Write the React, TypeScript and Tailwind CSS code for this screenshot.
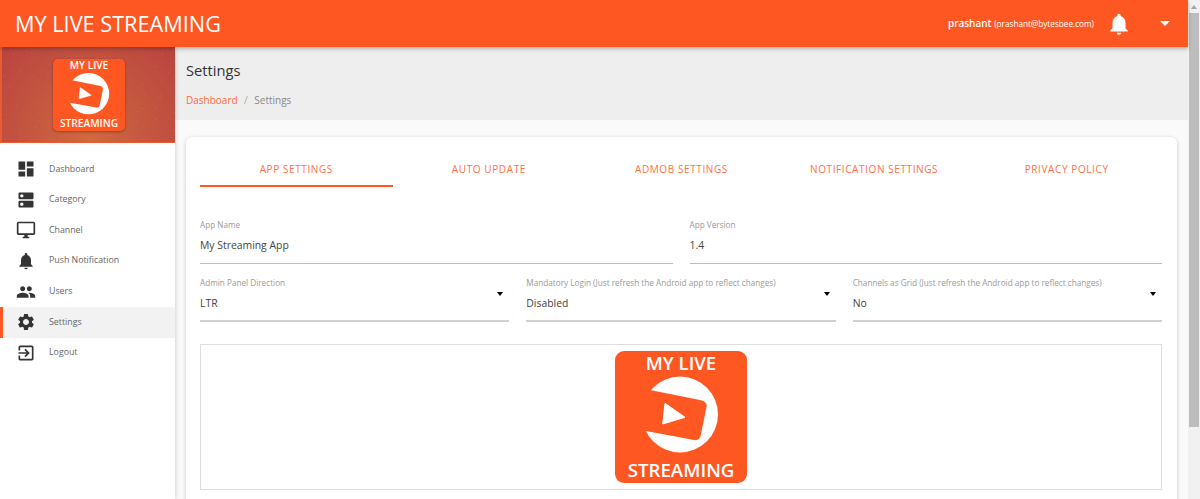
import { MdDashboard, MdDns, MdOutlineDesktopWindows, MdNotifications, MdPeople, MdSettings, MdExitToApp } from "react-icons/md";

function Logo({ className }: { className: string }) {
  return (
    <svg viewBox="0 0 132 132" className={className}>
      <rect width="132" height="132" rx="9" fill="#ff5722" />
      <circle cx="65" cy="63.5" r="38" fill="#fff" />
      <path d="M35 39 L85 49 Q92.500 50.500 91.500 56 L86 83 Q85 90 79 89 L31 80 L10 80 L10 39 Z" fill="#ff5722" />
      <path d="M50 52.300 L70 66.300 L47.700 73 Z" fill="#fff" stroke="#fff" strokeWidth="1" strokeLinejoin="round" />
      <text x="66" y="18.500" textAnchor="middle" fill="#fff" fontFamily="'Open Sans',sans-serif" fontWeight="600" fontSize="18.500">MY LIVE</text>
      <text x="66" y="125.500" textAnchor="middle" fill="#fff" fontFamily="'Open Sans',sans-serif" fontWeight="600" fontSize="18.700">STREAMING</text>
    </svg>
  );
}

const nav = [
  { label: "Dashboard", Icon: MdDashboard },
  { label: "Category", Icon: MdDns },
  { label: "Channel", Icon: MdOutlineDesktopWindows },
  { label: "Push Notification", Icon: MdNotifications },
  { label: "Users", Icon: MdPeople },
  { label: "Settings", Icon: MdSettings, active: true },
  { label: "Logout", Icon: MdExitToApp },
];

const tabs = ["APP SETTINGS", "AUTO UPDATE", "ADMOB SETTINGS", "NOTIFICATION SETTINGS", "PRIVACY POLICY"];

const specks = Array.from({ length: 90 }, (_, i) => ({
  x: (i * 73 + (i * i * 17) % 41) % 175,
  y: (i * 37 + (i * i * 29) % 53) % 96,
}));

function Field({ label, value, select }: { label: string; value: string; select?: boolean }) {
  return (
    <div className={`relative h-[46px] min-w-0 flex-1 ${select ? "border-b-2 border-[#d0d0d0]" : "border-b border-[#bdbdbd]"}`}>
      <div className="pt-[1px] text-[8.200px] leading-[12px] text-[#9a9a9a] whitespace-nowrap">{label}</div>
      <div className="mt-[6px] text-[10.400px] leading-[16px] text-[#444]">{value}</div>
      {select && <div className="absolute right-[6px] top-[16px] h-0 w-0 border-x-[3.500px] border-t-[4px] border-x-transparent border-t-black" />}
    </div>
  );
}

export default function App() {
  return (
    <div className="flex h-[499px] w-[1200px] overflow-hidden font-['Open_Sans',sans-serif]">
      <div className="flex min-w-0 flex-1 flex-col">
        <header className="relative z-20 flex h-[47px] shrink-0 items-center bg-[#ff5722] pl-[15px] pr-[18px] shadow-[0_2px_4px_rgba(0,0,0,0.25)]">
          <div className="flex-1 text-[21.700px] leading-[28px] text-white">MY LIVE STREAMING</div>
          <div className="text-[10px] font-semibold text-white">prashant <span className="text-[8.200px] font-normal">(prashant@bytesbee.com)</span></div>
          <MdNotifications className="ml-[12px] text-white" size={26} />
          <div className="ml-[28px] h-0 w-0 border-x-[5px] border-t-[5px] border-x-transparent border-t-white" />
        </header>
        <div className="flex min-h-0 flex-1">
          <aside className="relative z-10 w-[175px] shrink-0 bg-white shadow-[1px_0_4px_rgba(0,0,0,0.15)]">
            <div className="relative flex h-[96px] items-center justify-center border-b border-l-2 border-[#ee5a30] bg-[radial-gradient(ellipse_at_50%_95%,#d2693f_0%,#c65a40_40%,#b9433f_100%)]">
              <svg className="absolute inset-0 h-full w-full" viewBox="0 0 175 96">
                {specks.map((s, i) => (
                  <rect key={i} x={s.x} y={s.y} width="0.800" height="0.800" fill="#f08a5a" opacity="0.6" />
                ))}
              </svg>
              <Logo className="relative h-[72px] w-[72px] rounded-[5px] shadow-[0_1px_3px_rgba(0,0,0,0.3)]" />
            </div>
            <nav className="pt-[11px]">
              {nav.map(({ label, Icon, active }) => (
                <div key={label} className={`flex h-[30.600px] items-center text-[8.800px] text-[#666] ${active ? "border-l-[3px] border-[#ff5722] bg-[#f2f2f2] pl-[13px]" : "pl-[16px]"}`}>
                  <Icon size={20} className="text-[#333]" />
                  <span className="ml-[13px]">{label}</span>
                </div>
              ))}
            </nav>
          </aside>
          <main className="min-w-0 flex-1 overflow-hidden bg-[#fafafa]">
            <div className="h-[73px] bg-[#eeeeee] pl-[11px] pt-[13px]">
              <div className="text-[14.700px] leading-[20px] text-[#333]">Settings</div>
              <div className="mt-[13px] flex gap-[6.500px] text-[10px] leading-[14px]">
                <span className="text-[#ff6a3c]">Dashboard</span>
                <span className="text-[#aaa]">/</span>
                <span className="text-[#888]">Settings</span>
              </div>
            </div>
            <div className="mx-[11px] mt-[17px] h-[400px] rounded-[6px] bg-white pl-[14px] pr-[15px] shadow-[0_1px_4px_rgba(0,0,0,0.2)]">
              <div className="mr-[-1px] flex pt-[7px]">
                {tabs.map((t, i) => (
                  <div key={t} className={`flex h-[43px] flex-1 items-center justify-center text-[10px] tracking-[0.6px] text-[#ff7043] ${i === 0 ? "border-b-2 border-[#ff5722] pt-[10px]" : "pt-[8px]"}`}>{t}</div>
                ))}
              </div>
              <div className="mt-[31px] flex gap-[17px]">
                <Field label="App Name" value="My Streaming App" />
                <Field label="App Version" value="1.4" />
              </div>
              <div className="mt-[12px] flex gap-[17px]">
                <Field label="Admin Panel Direction" value="LTR" select />
                <Field label="Mandatory Login (Just refresh the Android app to reflect changes)" value="Disabled" select />
                <Field label="Channels as Grid (Just refresh the Android app to reflect changes)" value="No" select />
              </div>
              <div className="mt-[22px] flex h-[146px] items-center justify-center border border-[#dedede]">
                <Logo className="h-[132px] w-[132px]" />
              </div>
            </div>
          </main>
        </div>
      </div>
      <div className="flex w-[12px] shrink-0 flex-col bg-[#f1f1f1]">
        <div className="flex h-[13px] items-center justify-center">
          <div className="h-0 w-0 border-x-[3px] border-b-[4px] border-x-transparent border-b-[#a3a3a3]" />
        </div>
        <div className="mx-[1px] h-[414px] bg-[#bdbdbd]" />
      </div>
    </div>
  );
}
